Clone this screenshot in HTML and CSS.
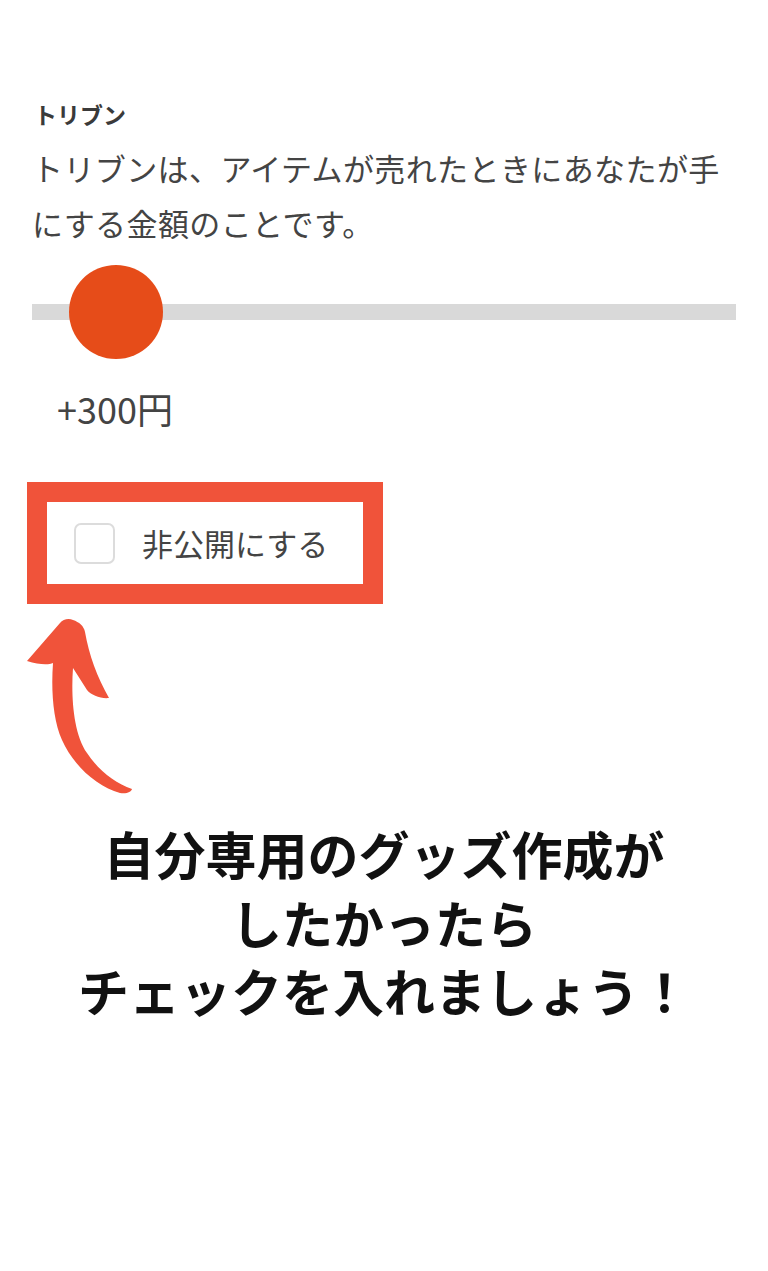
FILE: index.html
```
<!DOCTYPE html>
<html lang="ja">
<head>
<meta charset="utf-8">
<link rel="stylesheet" href="styles.css">
</head>
<body>
<main class="page">
  <section class="form">
    <h2 class="label">トリブン</h2>
    <p class="desc">トリブンは、アイテムが売れたときにあなたが手にする金額のことです。</p>
    <div class="slider">
      <div class="track"></div>
      <div class="thumb"></div>
    </div>
    <div class="value">+300円</div>
    <div class="highlight">
      <span class="checkbox"></span>
      <span class="check-label">非公開にする</span>
    </div>
    <svg class="arrow" width="110" height="182" viewBox="0 0 110 182">
      <path d="M26 48 C22 50 12 50 0 46 L33 8 C36 4 42 3 46 5 C52 7 57 11 58 17 C62 40 70 62 82 83 C74 84 64 80 60 75 L46 53 C44 80 46 118 60 138 C72 156 88 168 105 174 C104 177 100 179 93 178 C70 172 46 150 35 125 C26 105 24 75 26 48 Z" fill="#f0533a"/>
    </svg>
  </section>
  <p class="note">自分専用のグッズ作成が<br>したかったら<br>チェックを入れましょう！</p>
</main>
</body>
</html>
```
FILE: styles.css
```
html, body {
  margin: 0;
  padding: 0;
  background: #ffffff;
}
body {
  font-family: "Noto Sans CJK JP", "Noto Sans", sans-serif;
  color: #444444;
}
.page {
  width: 768px;
  min-height: 1271px;
}
.form {
  padding: 100px 32px 0 32px;
  display: flex;
  flex-direction: column;
  align-items: flex-start;
}
.label {
  margin: 0 0 0 2px;
  font-size: 23px;
  line-height: 28px;
  font-weight: 700;
  color: #3a3a3a;
}
.desc {
  margin: 12px 0 0 0;
  font-size: 31px;
  letter-spacing: 0.4px;
  line-height: 55px;
  color: #444444;
}
.slider {
  position: relative;
  margin-top: 15px;
  width: 100%;
  height: 94px;
  display: flex;
  align-items: center;
}
.track {
  width: 100%;
  height: 16px;
  background: #d9d9d9;
}
.thumb {
  position: absolute;
  left: 37px;
  top: 0;
  width: 94px;
  height: 94px;
  border-radius: 50%;
  background: #e64c19;
}
.value {
  margin: 26px 0 0 25px;
  font-size: 36px;
  line-height: 46px;
  color: #444444;
}
.highlight {
  margin: 51px 0 0 -5px;
  box-sizing: border-box;
  width: 356px;
  height: 122px;
  border: 20px solid #f0533a;
  padding-left: 27px;
  display: flex;
  align-items: center;
  gap: 27px;
}
.checkbox {
  box-sizing: border-box;
  width: 41px;
  height: 41px;
  border: 2px solid #dcdcdc;
  border-radius: 7px;
  background: #fff;
}
.check-label {
  font-size: 31px;
  line-height: 40px;
  color: #444444;
}
.arrow {
  display: block;
  margin: 11px 0 0 -5px;
}
.note {
  margin: 22px 0 0 0;
  text-align: center;
  font-size: 51px;
  line-height: 68.5px;
  font-weight: 700;
  color: #111111;
}
```
